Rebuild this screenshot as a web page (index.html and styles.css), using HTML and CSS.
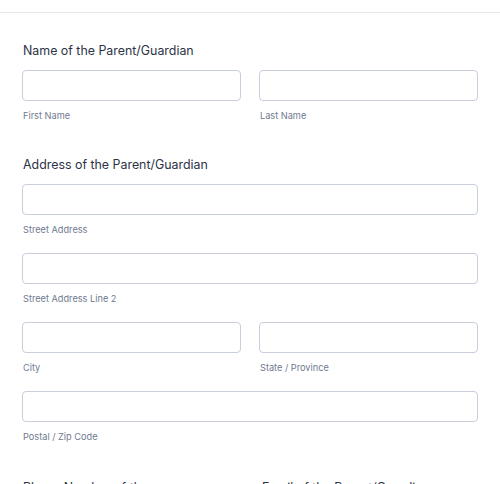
FILE: index.html
```html
<!DOCTYPE html>
<html lang="en">
<head>
    <meta charset="UTF-8">
    <meta name="viewport" content="width=device-width, initial-scale=1.0">
    <title>Parent/Guardian Information</title>
    <link rel="stylesheet" href="styles.css">
</head>
<body>
    <div class="top-bar"></div>

    <form class="form">
        <!-- Name -->
        <div class="section">
            <h2 class="section-title">Name of the Parent/Guardian</h2>
            <div class="row two-col">
                <div class="field">
                    <input type="text" id="first-name">
                    <label for="first-name">First Name</label>
                </div>
                <div class="field">
                    <input type="text" id="last-name">
                    <label for="last-name">Last Name</label>
                </div>
            </div>
        </div>

        <!-- Address -->
        <div class="section">
            <h2 class="section-title">Address of the Parent/Guardian</h2>
            <div class="row">
                <div class="field">
                    <input type="text" id="street">
                    <label for="street">Street Address</label>
                </div>
            </div>
            <div class="row">
                <div class="field">
                    <input type="text" id="street2">
                    <label for="street2">Street Address Line 2</label>
                </div>
            </div>
            <div class="row two-col">
                <div class="field">
                    <input type="text" id="city">
                    <label for="city">City</label>
                </div>
                <div class="field">
                    <input type="text" id="state">
                    <label for="state">State / Province</label>
                </div>
            </div>
            <div class="row">
                <div class="field">
                    <input type="text" id="zip">
                    <label for="zip">Postal / Zip Code</label>
                </div>
            </div>
        </div>

        <!-- Contact -->
        <div class="section contact two-col">
            <h2 class="section-title">Phone Number of the Parent/Guardian</h2>
            <h2 class="section-title email-title">Email of the Parent/Guardian</h2>
        </div>
    </form>
</body>
</html>
```

FILE: styles.css
```css
:root {
    --title-color: #2c3345;
    --label-color: #6f7a90;
    --border-color: #c8cedb;
    --line-color: #e6e8ee;
}

* {
    box-sizing: border-box;
    margin: 0;
    padding: 0;
    font-family: Inter, 'Noto Sans', sans-serif;
}

body {
    background-color: #fff;
    overflow: hidden;
    height: 484px;
}

.top-bar {
    height: 13px;
    border-bottom: 1px solid var(--line-color);
}

.form {
    padding: 0 22px;
}

.section {
    margin-top: 30px;
}

.section + .section {
    margin-top: 35px;
}

.section.contact {
    margin-top: 37px;
}

.section-title {
    font-size: 12.4px;
    font-weight: 400;
    line-height: 16px;
    color: var(--title-color);
    padding-left: 1px;
    margin-bottom: 11px;
}

.email-title {
    padding-left: 3px;
}

.two-col {
    display: grid;
    grid-template-columns: 1fr 1fr;
    column-gap: 18px;
}

.row + .row {
    margin-top: 17px;
}

.field input {
    display: block;
    width: 100%;
    height: 31px;
    border: 1px solid var(--border-color);
    border-radius: 4px;
    background-color: #fff;
}

.field label {
    display: block;
    margin-top: 8px;
    margin-bottom: -1px;
    padding-left: 1px;
    font-size: 9.2px;
    line-height: 14px;
    color: var(--label-color);
}
```
